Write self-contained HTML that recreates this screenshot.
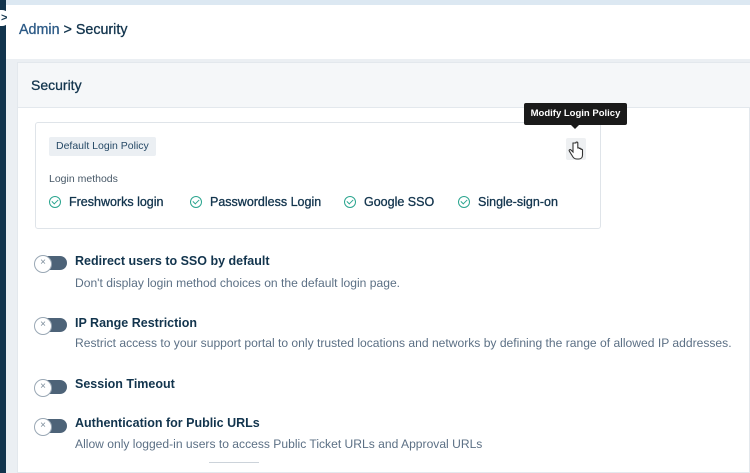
<!DOCTYPE html>
<html><head><meta charset="utf-8"><style>
*{margin:0;padding:0;box-sizing:border-box}
body{width:750px;height:473px;overflow:hidden;background:#ebeff3;font-family:"Liberation Sans",sans-serif;position:relative;color:#12344d}
.a{position:absolute;white-space:nowrap}
.sb{left:0;top:0;width:6px;height:473px;background:#12344d}
.tog{position:absolute;width:32px;height:14px;border-radius:7px;background:#4d6378}
.tog:before{content:"×";position:absolute;left:-1px;top:-1px;width:16px;height:16px;border-radius:50%;background:#fff;border:1px solid #9aa8b5;font-size:10px;line-height:13px;text-align:center;color:#7a8a99}
.t{font-weight:bold;font-size:12.5px;color:#12344d}
.d{font-size:12.1px;color:#5c7085}
.chk{display:inline-block;width:12px;height:12px;border:1.5px solid #2ba58f;border-radius:50%;position:relative;vertical-align:-2px;margin-right:8px}
.chk:after{content:"";position:absolute;left:3px;top:1px;width:3px;height:5px;border:solid #2ba58f;border-width:0 1.5px 1.5px 0;transform:rotate(45deg)}
.m{font-size:12.5px;color:#12344d;top:195px;-webkit-text-stroke:0.3px #12344d}
</style></head><body>
<div class="a" style="left:0;top:0;width:750px;height:5px;background:#dce8f2"></div>
<div class="a" style="left:6px;top:5px;width:744px;height:54px;background:#fff"></div>
<div class="a sb"></div>
<div class="a" style="left:0;top:10px;width:10px;height:16px;background:#fff;border-radius:0 8px 8px 0;font-size:11px;font-weight:bold;line-height:16px;padding-left:1px">&gt;</div>
<div class="a" style="left:19px;top:22px;font-size:14.3px;-webkit-text-stroke:0.3px"><span style="color:#2c5a86">Admin</span> <span style="color:#12344d">&gt; Security</span></div>
<div class="a" style="left:17px;top:62px;width:733px;height:411px;background:#fff;border:1px solid #e3e8ed"></div>
<div class="a" style="left:18px;top:63px;width:732px;height:45px;background:#f5f7f9;border-bottom:1px solid #e3e8ed"></div>
<div class="a" style="left:31px;top:77px;font-size:14px;color:#12344d;-webkit-text-stroke:0.3px #12344d">Security</div>
<div class="a" style="left:35px;top:122px;width:566px;height:107px;border:1px solid #dfe4e9;border-radius:3px;background:#fff"></div>
<div class="a" style="left:49px;top:137px;height:19px;padding:0 7px;background:#ebeff3;border-radius:2px;font-size:10.5px;line-height:19px;color:#264966">Default Login Policy</div>
<div class="a" style="left:49px;top:173px;font-size:10.5px;color:#475867">Login methods</div>
<div class="a m" style="left:49px"><span class="chk"></span>Freshworks login</div>
<div class="a m" style="left:190px"><span class="chk"></span>Passwordless Login</div>
<div class="a m" style="left:344px"><span class="chk"></span>Google SSO</div>
<div class="a m" style="left:458px"><span class="chk"></span>Single-sign-on</div>
<div class="a" style="left:566px;top:138px;width:20px;height:22px;background:#eef0f2;border-radius:2px"></div>
<svg class="a" style="left:566px;top:138px" width="20" height="24" viewBox="0 0 20 24"><path d="M7 5v9l-2-2c-1-1-2.5 0-1.6 1.2L7 19c1 1.5 2 2 4 2h2c2 0 3.5-1.5 3.5-4v-5c0-1-1.5-1-1.5 0v-1c0-1-1.6-1-1.6 0v-.5c0-1-1.6-1-1.6 0V5c0-1.3-2-1.3-2 0z" fill="#fff" stroke="#333" stroke-width="1.1"/></svg>
<div class="a" style="left:524px;top:103px;width:103px;height:22px;background:#1a1a1a;border-radius:2px;color:#fff;font-size:9.5px;font-weight:bold;line-height:22px;text-align:center">Modify Login Policy</div>
<div class="a" style="left:571px;top:125px;width:0;height:0;border:4px solid transparent;border-top-color:#1a1a1a"></div>

<div class="tog" style="left:35px;top:256px"></div>
<div class="a t" style="left:75px;top:254px">Redirect users to SSO by default</div>
<div class="a d" style="left:75px;top:276px">Don't display login method choices on the default login page.</div>
<div class="tog" style="left:35px;top:318px"></div>
<div class="a t" style="left:75px;top:316px">IP Range Restriction</div>
<div class="a d" style="left:75px;top:336px">Restrict access to your support portal to only trusted locations and networks by defining the range of allowed IP addresses.</div>
<div class="tog" style="left:35px;top:380px"></div>
<div class="a t" style="left:75px;top:377px">Session Timeout</div>
<div class="tog" style="left:35px;top:419px"></div>
<div class="a t" style="left:75px;top:416px">Authentication for Public URLs</div>
<div class="a d" style="left:75px;top:437px">Allow only logged-in users to access Public Ticket URLs and Approval URLs</div>
<div class="a" style="left:209px;top:462px;width:50px;height:1px;background:#ccd3da"></div>
</body></html>
